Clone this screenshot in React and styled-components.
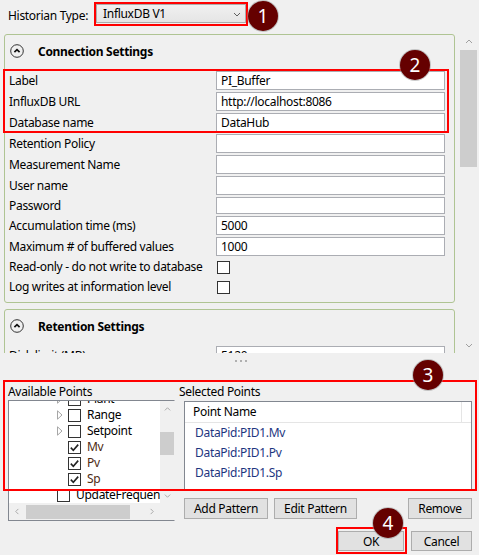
import React from 'react';
import styled, { createGlobalStyle } from 'styled-components';

const Global = createGlobalStyle`
  html, body { margin: 0; padding: 0; background: #f0f0f0; }
  body { font-family: "Noto Sans", "Open Sans", sans-serif; font-size: 12px; color: #000; }
  * { box-sizing: border-box; }
`;

const FONT = `"Noto Sans", "Open Sans", sans-serif`;

const Window = styled.div`
  position: relative;
  width: 479px;
  height: 555px;
  overflow: hidden;
  background: #f0f0f0;
  display: flex;
  flex-direction: column;
  font-family: ${FONT};
  font-size: 12px;
  letter-spacing: -0.3px;
`;

const TopBar = styled.div`
  height: 34px;
  display: flex;
  align-items: flex-start;
  padding: 4px 0 0 8px;
`;

const TopLabel = styled.div`
  width: 88px;
  line-height: 19px;
  padding-top: 2px;
`;

const Combo = styled.div`
  width: 150px;
  height: 19px;
  border: 1px solid #acacac;
  background: linear-gradient(#f0f0f0, #e5e5e5);
  display: flex;
  align-items: center;
  justify-content: space-between;
  padding: 0 4px 0 6px;
  line-height: 17px;
`;

const Viewport = styled.div`
  height: 319px;
  display: flex;
  align-items: stretch;
`;

const ScrollContent = styled.div`
  width: 451px;
  margin-left: 4px;
  overflow: hidden;
  display: flex;
  flex-direction: column;
`;

const Panel = styled.div`
  border: 1px solid #afc493;
  border-radius: 3px;
  padding: 0 0 6px 4px;
  margin-bottom: 6px;
  flex-shrink: 0;
`;

const PanelHeader = styled.div`
  height: 31px;
  display: flex;
  align-items: center;
  gap: 14px;
  padding-left: 1px;
  margin-bottom: 5px;
`;

const PanelTitle = styled.div`
  font-weight: 700;
  font-size: 12px;
  line-height: 16px;
  padding-top: 2px;
`;

const Fields = styled.div`
  display: grid;
  grid-template-columns: 207px 229px;
  row-gap: 2px;
`;

const FieldLabel = styled.div`
  height: ${p => p.$h || 19}px;
  line-height: ${p => p.$h || 19}px;
  white-space: nowrap;
`;

const TextBox = styled.div`
  height: ${p => p.$h || 19}px;
  border: 1px solid #abadb3;
  background: #fff;
  padding-left: 4px;
  line-height: ${p => (p.$h || 19) - 2}px;
  white-space: nowrap;
  overflow: hidden;
`;

const CheckCell = styled.div`
  height: 18px;
  display: flex;
  align-items: center;
  padding-left: 1px;
`;

const Box = styled.div`
  width: 13px;
  height: 13px;
  border: 1px solid #333;
  background: #fff;
  display: flex;
  align-items: center;
  justify-content: center;
  flex-shrink: 0;
`;

const VScroll = styled.div`
  width: 17px;
  margin-left: 5px;
  display: flex;
  flex-direction: column;
`;

const Arrow = styled.div`
  height: ${p => p.$h || 16}px;
  width: ${p => (p.$w ? `${p.$w}px` : 'auto')};
  display: flex;
  align-items: center;
  justify-content: center;
  flex-shrink: 0;
`;

const Thumb = styled.div`
  background: #cdcdcd;
  height: ${p => p.$h}px;
  margin-top: ${p => p.$top || 0}px;
  flex-shrink: 0;
`;

const Spacer = styled.div`
  flex: 1;
`;

const Splitter = styled.div`
  height: 30px;
  display: flex;
  justify-content: center;
  gap: 3px;
  padding-top: 7px;
  padding-left: 2px;
`;

const Dot = styled.div`
  width: 2px;
  height: 2px;
  background: #b0b0b0;
`;

const Points = styled.div`
  display: grid;
  grid-template-columns: 167px 288px;
  column-gap: 9px;
  padding-left: 8px;
`;

const Column = styled.div`
  display: flex;
  flex-direction: column;
`;

const ColLabel = styled.div`
  height: 17px;
  line-height: 17px;
  margin-left: ${p => p.$shift || 0}px;
  white-space: nowrap;
`;

const Tree = styled.div`
  height: 121px;
  border: 1px solid #828790;
  border-right-color: #f0f0f0;
  display: grid;
  grid-template-columns: 151px 14px;
  grid-template-rows: 102px 17px;
  background: #fff;
`;

const TreeView = styled.div`
  overflow: hidden;
  background: #fff;
`;

const TreeList = styled.div`
  margin-top: -10px;
`;

const TreeRow = styled.div`
  height: 16px;
  display: flex;
  align-items: center;
  padding-left: 48px;
  white-space: nowrap;
  color: ${p => (p.$checked ? '#4d2a12' : '#000')};
`;

const Expander = styled.div`
  width: 11px;
  height: 16px;
  display: flex;
  align-items: center;
`;

const ItemText = styled.span`
  margin-left: 6px;
  line-height: 16px;
`;

const TreeVBar = styled.div`
  background: #f0f0f0;
  display: flex;
  flex-direction: column;
`;

const TreeHBar = styled.div`
  background: #f0f0f0;
  display: flex;
  align-items: stretch;
`;

const HThumb = styled.div`
  width: 104px;
  background: #cdcdcd;
  margin: 2px 0 1px 0;
`;

const Corner = styled.div`
  background: #f0f0f0;
`;

const ListBox = styled.div`
  height: 90px;
  margin-top: 1px;
  border: 1px solid #828790;
  background: #fff;
  display: flex;
  flex-direction: column;
`;

const ListHeader = styled.div`
  height: 21px;
  display: flex;
  border-bottom: 1px solid #e5e5e5;
`;

const HeaderCell = styled.div`
  width: 277px;
  border-right: 1px solid #e5e5e5;
  padding-left: 8px;
  line-height: 20px;
`;

const ListItem = styled.div`
  height: 20px;
  line-height: 20px;
  padding-left: 10px;
  color: #1d367f;
  white-space: nowrap;
`;

const ButtonRow = styled.div`
  display: flex;
  gap: 6px;
  margin-top: 7px;
`;

const Button = styled.div`
  width: ${p => p.$w}px;
  height: ${p => p.$h || 21}px;
  background: #e1e1e1;
  border: 1px solid #adadad;
  display: flex;
  align-items: center;
  justify-content: center;
  margin-left: ${p => (p.$push ? 'auto' : '0')};
  white-space: nowrap;
`;

const Footer = styled.div`
  display: flex;
  justify-content: flex-end;
  gap: 7px;
  padding: 10px 7px 0 0;
`;

const Highlight = styled.div`
  position: absolute;
  border: 2px solid #f00;
  pointer-events: none;
`;

const Badge = styled.div`
  position: absolute;
  width: 30px;
  height: 30px;
  border-radius: 50%;
  background: #650000;
  box-shadow: 0 0 0 1px rgba(150, 150, 150, 0.5);
  color: #fff;
  font-family: ${FONT};
  font-size: 19px;
  letter-spacing: 0;
  line-height: 30px;
  text-align: center;
`;

const Chevron = ({ dir = 'up', size = 7, color = '#a0a0a0', w = 1 }) => {
  const paths = {
    up: 'M1 5 L4 2 L7 5',
    down: 'M1 3 L4 6 L7 3',
    left: 'M5 1 L2 4 L5 7',
    right: 'M3 1 L6 4 L3 7',
  };
  return (
    <svg width={size} height={size} viewBox="0 0 8 8">
      <path d={paths[dir]} fill="none" stroke={color} strokeWidth={w} />
    </svg>
  );
};

const CollapseIcon = () => (
  <svg width="14" height="14" viewBox="0 0 14 14">
    <circle cx="7" cy="7" r="6.3" fill="none" stroke="#333" strokeWidth="1" />
    <path d="M4.4 8.2 L7 5.6 L9.6 8.2" fill="none" stroke="#111" strokeWidth="1.7" />
  </svg>
);

const Tick = () => (
  <svg width="11" height="11" viewBox="0 0 11 11">
    <path d="M1.8 5.6 L4.3 8.2 L9.2 2.6" fill="none" stroke="#222" strokeWidth="1.6" />
  </svg>
);

const Triangle = () => (
  <svg width="6" height="10" viewBox="0 0 6 10">
    <path d="M0.5 0.8 L5 5 L0.5 9.2 Z" fill="none" stroke="#a6a6a6" strokeWidth="1" />
  </svg>
);

const connectionFields = [
  { label: 'Label', value: 'PI_Buffer' },
  { label: 'InfluxDB URL', value: 'http://localhost:8086' },
  { label: 'Database name', value: 'DataHub' },
  { label: 'Retention Policy', value: '' },
  { label: 'Measurement Name', value: '' },
  { label: 'User name', value: '' },
  { label: 'Password', value: '', h: 17 },
  { label: 'Accumulation time (ms)', value: '5000' },
  { label: 'Maximum # of buffered values', value: '1000' },
];

const checkFields = ['Read-only - do not write to database', 'Log writes at information level'];

const treeItems = [
  { name: 'Plant', expander: true },
  { name: 'Range', expander: true },
  { name: 'Setpoint', expander: true },
  { name: 'Mv', checked: true },
  { name: 'Pv', checked: true },
  { name: 'Sp', checked: true },
  { name: 'UpdateFrequency' },
];

const selected = ['DataPid:PID1.Mv', 'DataPid:PID1.Pv', 'DataPid:PID1.Sp'];

export default function App() {
  return (
    <>
      <Global />
      <Window>
        <TopBar>
          <TopLabel>Historian Type:</TopLabel>
          <Combo>
            <span>InfluxDB V1</span>
            <Chevron dir="down" size={8} color="#606060" />
          </Combo>
        </TopBar>

        <Viewport>
          <ScrollContent>
            <Panel>
              <PanelHeader>
                <CollapseIcon />
                <PanelTitle>Connection Settings</PanelTitle>
              </PanelHeader>
              <Fields>
                {connectionFields.map(f => (
                  <React.Fragment key={f.label}>
                    <FieldLabel $h={f.h}>{f.label}</FieldLabel>
                    <TextBox $h={f.h}>{f.value}</TextBox>
                  </React.Fragment>
                ))}
                {checkFields.map(c => (
                  <React.Fragment key={c}>
                    <FieldLabel $h={18}>{c}</FieldLabel>
                    <CheckCell>
                      <Box />
                    </CheckCell>
                  </React.Fragment>
                ))}
              </Fields>
            </Panel>
            <Panel>
              <PanelHeader>
                <CollapseIcon />
                <PanelTitle>Retention Settings</PanelTitle>
              </PanelHeader>
              <Fields>
                <FieldLabel>Disk limit (MB)</FieldLabel>
                <TextBox>5120</TextBox>
              </Fields>
            </Panel>
          </ScrollContent>
          <VScroll>
            <Arrow $h={16}>
              <Chevron dir="up" size={8} />
            </Arrow>
            <Thumb $h={117} />
            <Spacer />
            <Arrow $h={16}>
              <Chevron dir="down" size={8} />
            </Arrow>
          </VScroll>
        </Viewport>

        <Splitter>
          <Dot />
          <Dot />
          <Dot />
        </Splitter>

        <Points>
          <Column>
            <ColLabel>Available Points</ColLabel>
            <Tree>
              <TreeView>
                <TreeList>
                  {treeItems.map(t => (
                    <TreeRow key={t.name} $checked={t.checked}>
                      <Expander>{t.expander && <Triangle />}</Expander>
                      <Box>{t.checked && <Tick />}</Box>
                      <ItemText>{t.name}</ItemText>
                    </TreeRow>
                  ))}
                </TreeList>
              </TreeView>
              <TreeVBar>
                <Arrow $h={16}>
                  <Chevron dir="up" size={7} />
                </Arrow>
                <Thumb $h={23} $top={15} />
                <Spacer />
                <Arrow $h={16}>
                  <Chevron dir="down" size={7} />
                </Arrow>
              </TreeVBar>
              <TreeHBar>
                <Arrow $h={17} $w={17}>
                  <Chevron dir="left" size={7} />
                </Arrow>
                <HThumb />
                <Spacer />
                <Arrow $h={17} $w={17}>
                  <Chevron dir="right" size={7} />
                </Arrow>
              </TreeHBar>
              <Corner />
            </Tree>
          </Column>
          <Column>
            <ColLabel $shift={-5}>Selected Points</ColLabel>
            <ListBox>
              <ListHeader>
                <HeaderCell>Point Name</HeaderCell>
              </ListHeader>
              {selected.map(s => (
                <ListItem key={s}>{s}</ListItem>
              ))}
            </ListBox>
            <ButtonRow>
              <Button $w={84}>Add Pattern</Button>
              <Button $w={83}>Edit Pattern</Button>
              <Button $w={64} $push>Remove</Button>
            </ButtonRow>
          </Column>
        </Points>

        <Footer>
          <Button $w={66} $h={20}>OK</Button>
          <Button $w={61} $h={20}>Cancel</Button>
        </Footer>

        <Highlight style={{ left: 94, top: 2, width: 154, height: 24 }} />
        <Highlight style={{ left: 3, top: 69, width: 446, height: 64 }} />
        <Highlight style={{ left: 3, top: 380, width: 474, height: 111 }} />
        <Highlight style={{ left: 336, top: 527, width: 71, height: 27 }} />

        <Badge style={{ left: 248, top: 1 }}>1</Badge>
        <Badge style={{ left: 400, top: 50 }}>2</Badge>
        <Badge style={{ left: 413, top: 360 }}>3</Badge>
        <Badge style={{ left: 373, top: 508 }}>4</Badge>
      </Window>
    </>
  );
}
